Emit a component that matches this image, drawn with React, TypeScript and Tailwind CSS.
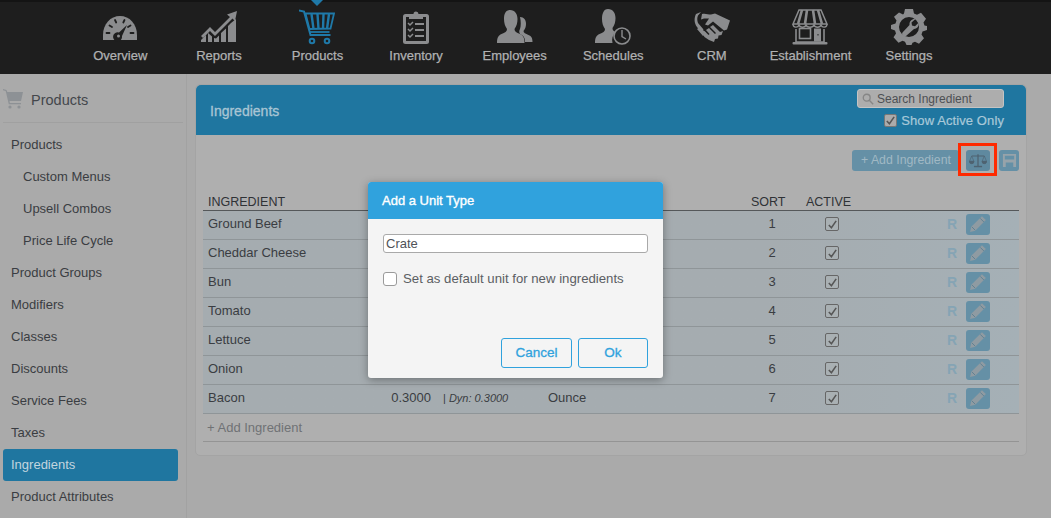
import type { ReactNode } from "react";

const FONT = "font-['Liberation_Sans',Arial,sans-serif]";

function Gauge() {
  return (
    <svg viewBox="0 0 36 36" className="h-9 w-9" fill="#8b8c8e">
      <path d="M1 31v-5C1 15 8.500 7 18 7s17 8 17 19v5z" />
      <g stroke="#1e1e1e" strokeWidth="1.800" strokeLinecap="round">
        <path d="M4.500 24h3M7.500 16.500l2.500 1.500M13 11l1.200 2.500M22.500 11l-1.200 2.500M28.500 16.500l-2.500 1.500M31.500 24h-3" />
      </g>
      <path d="M25 16l-8 7.500a4.500 4.500 0 1 0 3 3.500z" fill="#1e1e1e" />
      <circle cx="16.500" cy="27" r="1.500" fill="#8b8c8e" />
    </svg>
  );
}

function Chart() {
  return (
    <svg viewBox="0 0 36 36" className="h-9 w-9" fill="#8b8c8e">
      <path d="M0 27l9-9 5 5L29 8l-3-2.500L36 2l-2 10-2.500-2.500L14 27l-5-5-7 7z" />
      <path d="M0 33v-2l5-5v7zM7 33v-9l4 3.500V33zM13 33v-4l2 .5 3-3V33zM20 33V24l5-4.500V33zM27 33V17l3-3 5 -4V33z" />
    </svg>
  );
}

function Cart({ className = "h-9 w-9", color = "#1f79a8" }: { className?: string; color?: string }) {
  return (
    <svg viewBox="0 0 36 36" className={className} fill="none" stroke={color} strokeWidth="1.800">
      <path d="M0 1.500l5 1 6.500 23.500h20" strokeWidth="2" />
      <path d="M6.500 4.500H35l-3.500 15-21 .5z" strokeWidth="1.800" />
      <path d="M12.500 5l2 15M18.500 5l1 15M24.500 5l-.5 15M30 5l-2 15" strokeWidth="2.400" />
      <path d="M10.500 23h20" strokeWidth="1.800" />
      <circle cx="13" cy="32" r="2.300" strokeWidth="2" />
      <circle cx="28" cy="32" r="2.300" strokeWidth="2" />
    </svg>
  );
}

function SideCart() {
  return (
    <svg viewBox="0 0 20 20" className="-mt-[4px] h-5 w-5" fill="#8d9195">
      <path d="M0 0l3.500 1 .8 2H20l-2 9H6.500l.4 2H18v1.200H5.800L2.700 2 0 1.200z" />
      <circle cx="7" cy="18" r="1.600" />
      <circle cx="16" cy="18" r="1.600" />
    </svg>
  );
}

function Clipboard() {
  return (
    <svg viewBox="0 0 36 36" className="h-9 w-9">
      <rect x="5" y="5" width="26" height="30" rx="2.500" fill="#8b8c8e" />
      <rect x="8" y="8" width="20" height="24" fill="#1e1e1e" />
      <path d="M11 5h4.500a2.500 2.500 0 0 1 5 0H25v5H11z" fill="#8b8c8e" />
      <g fill="none" stroke="#8b8c8e" strokeWidth="1.500">
        <path d="M10 14l2 2 3-3M10 20l2 2 3-3M10 26l2 2 3-3" />
        <path d="M17 15h9M17 21h9M17 27h9" strokeWidth="2" />
      </g>
    </svg>
  );
}

function Employees() {
  return (
    <svg viewBox="0 0 36 36" className="h-9 w-9" fill="#8b8c8e">
      <path d="M23 8c4 0 6 3 6 7 0 3-1 5-2.500 7 0 2 2 2.500 5 4 3 1.300 4 3 4 7H28c0-4-1-6-5-8-1-2-1-3 0-5 1-3 1-8 0-12z" />
      <path d="M13 1c5 0 7.500 4 7.500 9 0 4-1 7-3 10 0 2.500 2 3.500 5.500 5 3 1.300 4.500 3.500 4.500 9H0c0-5.500 1.500-7.700 4.500-9 3.500-1.500 5.500-2.500 5.500-5-2-3-3-6-3-10 0-5 1.500-9 6-9z" />
    </svg>
  );
}

function Schedules() {
  return (
    <svg viewBox="0 0 36 36" className="h-9 w-9" fill="#8b8c8e">
      <path d="M13 0c5 0 7.500 4 7.500 9 0 4-1 7-3 10 0 2.500 1 3 3 4a12 12 0 0 0-3 11H0c0-5.500 1.500-7.700 4.500-9 3.500-1.500 5.500-2.500 5.500-5-2-3-3-6-3-10 0-5 1.500-10 6-10z" />
      <circle cx="27" cy="27" r="8" fill="none" stroke="#8b8c8e" strokeWidth="1.600" />
      <path d="M27 21v6.500l4 2.500" fill="none" stroke="#8b8c8e" strokeWidth="1.400" />
    </svg>
  );
}

function Handshake() {
  return (
    <svg viewBox="0 0 36 36" className="h-9 w-9" fill="#8b8c8e">
      <path d="M7 3L2 5C0 9 0 14 3 18l4 5 2.500-2.500L4 14c-1-3-1-5 0-7.500z" />
      <path d="M3 20l3-2 6 6-3 3zM8 5c3-1 6 .5 9 .5l4-1 15 7-3 9-3 1-11-9-5 4-3-1 4-6-5 0-3 1z" />
      <path d="M8 24l2.500-2 4 4 1-1-3.500-4 3-2 6 6 1-1-6-6 3-2 7 7 3-1-1.500 4-3 .5-.5 3-3 .5-1 3-5-2-4.500-3z" />
    </svg>
  );
}

function Store() {
  return (
    <svg viewBox="0 0 36 36" className="h-9 w-9" fill="none" stroke="#8b8c8e">
      <path d="M7 1h22l6 14H1z" strokeWidth="1.500" />
      <path d="M10 1L6 15M15 1l-2 14M21 1l2 14M26 1l4 14" strokeWidth="2.600" />
      <path d="M1 15c0 4 5 4 6 1 1 3 6 3 7 0 1 3 7 3 8 0 1 3 6 3 7 0 1 3 6 3 6-1" strokeWidth="1.400" />
      <path d="M4 20v13h28V20" strokeWidth="1.600" />
      <rect x="7.500" y="19.500" width="11" height="10" strokeWidth="1.600" />
      <rect x="22" y="19.500" width="7" height="13" fill="#8b8c8e" stroke="none" />
      <rect x="25.500" y="25" width="1" height="1.500" fill="#1e1e1e" stroke="none" />
      <rect x="0.500" y="33" width="35" height="2.500" rx="1" fill="#8b8c8e" stroke="none" />
    </svg>
  );
}

function Gear() {
  return (
    <svg viewBox="0 0 36 36" className="h-9 w-9" fill="#8b8c8e">
      <path
        fillRule="evenodd"
        d="M14 0h8l1 4.500 3 1.300 4-2 5 6-2.500 3.700 1 3L36 17v4l-4.500 1.500-1 3 2.500 3.700-5 5.500-4-2-2.500 1L20.500 36h-5L14 32.700l-2.500-1-4 2-5-5.500L5 24.500l-1-3L0 20v-4l4.500-1.500 1-3L3 7.800l5-4.300 4 2 1-1zM18 8a10 10 0 1 0 0 20 10 10 0 0 0 0-20z"
      />
      <path d="M24.500 10l-4 3.500.5 3 3 .8 3.500-3.500c.5 3-1 6-4.500 6.200L15 27c-2 1.500-5-1-3.500-3.500l7-7.500c-.3-4 2.500-6.500 6-6z" />
    </svg>
  );
}

const navItems: { label: string; icon: ReactNode; active?: boolean }[] = [
  { label: "Overview", icon: <Gauge /> },
  { label: "Reports", icon: <Chart /> },
  { label: "Products", icon: <Cart />, active: true },
  { label: "Inventory", icon: <Clipboard /> },
  { label: "Employees", icon: <Employees /> },
  { label: "Schedules", icon: <Schedules /> },
  { label: "CRM", icon: <Handshake /> },
  { label: "Establishment", icon: <Store /> },
  { label: "Settings", icon: <Gear /> },
];

const sideLinks = [
  { label: "Products" },
  { label: "Custom Menus", sub: true },
  { label: "Upsell Combos", sub: true },
  { label: "Price Life Cycle", sub: true },
  { label: "Product Groups" },
  { label: "Modifiers" },
  { label: "Classes" },
  { label: "Discounts" },
  { label: "Service Fees" },
  { label: "Taxes" },
  { label: "Ingredients", active: true },
  { label: "Product Attributes" },
];

const rows = [
  { name: "Ground Beef", sort: 1 },
  { name: "Cheddar Cheese", sort: 2 },
  { name: "Bun", sort: 3 },
  { name: "Tomato", sort: 4 },
  { name: "Lettuce", sort: 5 },
  { name: "Onion", sort: 6 },
  { name: "Bacon", sort: 7, cost: "0.3000", dyn: "Dyn: 0.3000", unit: "Ounce" },
];

function Pencil() {
  return (
    <svg viewBox="0 0 16 16" className="h-[18px] w-[18px]">
      <path d="M11.500 1l3.500 3.500L5.500 14 1 15l1-4.500z" fill="#8f9ba2" />
      <path d="M10 3l3.200 3.200M2.500 10.500l3 3" stroke="#557a8e" strokeWidth="0.700" fill="none" />
    </svg>
  );
}

function Scale() {
  return (
    <svg viewBox="0 0 20 16" className="h-[15px] w-[18px]" fill="none" stroke="#4e6270" strokeWidth="1.100">
      <path d="M10 1v13" strokeWidth="1.400" />
      <path d="M5.500 14.700h9" strokeWidth="1.600" />
      <path d="M3 3h14" />
      <path d="M3 3L.500 9h5zM17 3l-2.500 6h5z" strokeWidth="0.700" />
      <path d="M.500 9a2.500 2.500 0 0 0 5 0zM14.500 9a2.500 2.500 0 0 0 5 0z" fill="#4e6270" />
    </svg>
  );
}

function Disk() {
  return (
    <svg viewBox="0 0 16 16" className="h-[15px] w-[15px]" fill="#97a3aa">
      <path fillRule="evenodd" d="M1 1h14v14H1zM3 3v4h10V3zM4 10v5h8v-5z" />
    </svg>
  );
}

function Check({ className }: { className: string }) {
  return (
    <span className={`flex items-center justify-center rounded-[2px] border ${className}`}>
      <svg viewBox="0 0 12 12" className="h-[11px] w-[11px]" fill="none" stroke="#565656" strokeWidth="1.700">
        <path d="M2 6.500l2.800 3L10 2" />
      </svg>
    </span>
  );
}

export default function App() {
  return (
    <div className={`${FONT} relative h-[518px] w-[1051px] overflow-hidden bg-[#aaaaaa] text-[13px] text-[#3a3d42]`}>
      <header className="relative flex h-[74px] border-t-2 border-[#141414] bg-[#1e1e1e] pl-[71px]">
        {navItems.map((item) => (
          <div key={item.label} className="relative flex w-[98.600px] flex-col items-center pt-[7px]">
            {item.active ? (
              <span className="absolute top-[-2px] left-1/2 h-0 w-0 -translate-x-1/2 border-x-[6px] border-t-[6px] border-x-transparent border-t-[#1f79a8]" />
            ) : null}
            {item.icon}
            <span className="mt-[3px] text-[13px] leading-[16px] text-[#b0b1b2] [-webkit-text-stroke:0.25px]">
              {item.label}
            </span>
          </div>
        ))}
      </header>

      <div className="flex">
        <aside className="h-[444px] w-[187px] shrink-0 border-r border-[#a2a2a2] pt-[2px]">
          <div className="mx-[3px] flex h-[47px] items-center gap-[8px] border-b border-[#a0a0a0] pt-[4px] text-[14.500px] text-[#44474c]">
            <SideCart />
            <span>Products</span>
          </div>
          <nav className="pt-[6px]">
            {sideLinks.map((link) => (
              <div
                key={link.label}
                className={`ml-[3px] flex h-[32px] w-[175px] items-center rounded-[3px] ${link.sub ? "pl-[20px]" : "pl-[8px]"} ${link.active ? "bg-[#1f76a0] text-[#c2d5df]" : ""}`}
              >
                {link.label}
              </div>
            ))}
          </nav>
        </aside>

        <main className="pt-[10px] pl-[8px]">
          <section className="h-[372px] w-[832px] rounded-[5px] border border-[#a4a4a4] bg-[#afafaf]">
            <div className="flex h-[50px] justify-between rounded-t-[5px] bg-[#1f76a0] pt-[4px] pr-[22px] pl-[14px]">
              <h1 className="pt-[14px] text-[14px] leading-[16px] text-[#a9c5d4] [-webkit-text-stroke:0.3px]">Ingredients</h1>
              <div className="flex flex-col items-end">
                <div className="flex h-[19px] w-[147px] items-center gap-[3px] rounded-[3px] border border-[#c4c4c4] bg-[#adadad] pl-[4px] text-[12px] text-[#4d5054]">
                  <svg viewBox="0 0 14 14" className="h-3 w-3" fill="none" stroke="#868686" strokeWidth="1.600">
                    <circle cx="5.500" cy="5.500" r="4" />
                    <path d="M8.500 8.500l4.500 4.500" />
                  </svg>
                  <span>Search Ingredient</span>
                </div>
                <div className="mt-[3px] flex items-center gap-[4px] text-[13px] tracking-[0.1px] text-[#a9c9d9] [-webkit-text-stroke:0.2px]">
                  <Check className="h-[13px] w-[13px] border-[#777] bg-[#ababab]" />
                  <span>Show Active Only</span>
                </div>
              </div>
            </div>

            <div className="flex h-[64px] items-start justify-end gap-[7px] pt-[15px] pr-[7px]">
              <div className="flex h-[21px] w-[107px] items-center rounded-[3px] bg-[#6590a6] pl-[9px] text-[12.300px] text-[#a0b8c4]">
                + Add Ingredient
              </div>
              <div className="relative flex items-start gap-[9px]">
                <div className="flex h-[21px] w-[24px] items-center justify-center rounded-[3px] bg-[#5f899f]">
                  <Scale />
                </div>
                <span className="absolute top-[-7px] left-[-8px] h-[33px] w-[39px] border-[3px] border-[#ff2a00]" />
                <div className="flex h-[21px] w-[20px] items-center justify-center rounded-[3px] bg-[#6590a6]">
                  <Disk />
                </div>
              </div>
            </div>

            <div className="mx-[7px]">
              <div className="relative -mt-[8px] h-[20px] border-b border-[#55585a] pt-[3px] text-[12.500px] leading-[16px] text-[#2f3236]">
                <span className="absolute left-[5px]">INGREDIENT</span>
                <span className="absolute left-[345px]">INVENTORY UNITS</span>
                <span className="absolute left-[548px]">SORT</span>
                <span className="absolute left-[603px]">ACTIVE</span>
              </div>
              {rows.map((row) => (
                <div
                  key={row.name}
                  className="relative flex h-[29px] items-center border-b border-[#8f9598] bg-gradient-to-r from-[#a5acb0] via-[#a5acb0] via-70% to-[#a5b0b6] pb-[2px] pl-[5px]"
                >
                  <span className="w-[173px]">{row.name}</span>
                  <span className="w-[50px] text-right">{row.cost}</span>
                  {row.dyn ? (
                    <span className="ml-[12px] w-[105px] text-[11px] italic">
                      <span className="not-italic">|</span> {row.dyn}
                    </span>
                  ) : (
                    <span className="ml-[12px] w-[105px]" />
                  )}
                  <span className="w-[209px]">{row.unit}</span>
                  <span className="w-[30px] text-center">{row.sort}</span>
                  <span className="ml-[15px] flex w-[60px] justify-center">
                    <Check className="h-[14px] w-[14px] border-[#666] bg-[#a9b0b3]" />
                  </span>
                  <span className="ml-[85px] w-[19px] text-[14px] font-bold text-[#85a4b4]">R</span>
                  <span className="flex h-[21px] w-[24px] items-center justify-center rounded-[3px] bg-[#6590a6]">
                    <Pencil />
                  </span>
                </div>
              ))}
              <div className="flex h-[28px] items-center border-b border-[#949494] pl-[4px] text-[#6f7275]">
                + Add Ingredient
              </div>
            </div>
          </section>
        </main>
      </div>

      <div className="absolute top-[182px] left-[368px] h-[196px] w-[295px] rounded-[3px] bg-[#f4f4f4] shadow-[0_2px_8px_rgba(0,0,0,0.35)]">
        <div className="flex h-[37px] items-center rounded-t-[3px] bg-[#30a2dd] pl-[14px] text-[13px] text-white [-webkit-text-stroke:0.35px]">
          Add a Unit Type
        </div>
        <div className="flex h-[159px] flex-col px-[15px] pt-[15px]">
          <div className="flex h-[19px] items-center rounded-[3px] border border-[#a9a9a9] bg-white pl-[2px] text-[13px] text-[#4f5258]">
            Crate
          </div>
          <label className="mt-[16px] flex items-center gap-[6px] text-[13.200px] text-[#5b5e63]">
            <span className="h-[14px] w-[14px] rounded-[3px] border border-[#9a9a9a] bg-white" />
            Set as default unit for new ingredients
          </label>
          <div className="mt-auto mb-[10px] flex justify-end gap-[6px]">
            <button type="button" className="h-[30px] w-[71px] rounded-[3px] border border-[#30a2dd] text-[13.500px] text-[#30a2dd] [-webkit-text-stroke:0.3px]">
              Cancel
            </button>
            <button type="button" className="h-[30px] w-[70px] rounded-[3px] border border-[#30a2dd] text-[13.500px] text-[#30a2dd] [-webkit-text-stroke:0.3px]">
              Ok
            </button>
          </div>
        </div>
      </div>
    </div>
  );
}
